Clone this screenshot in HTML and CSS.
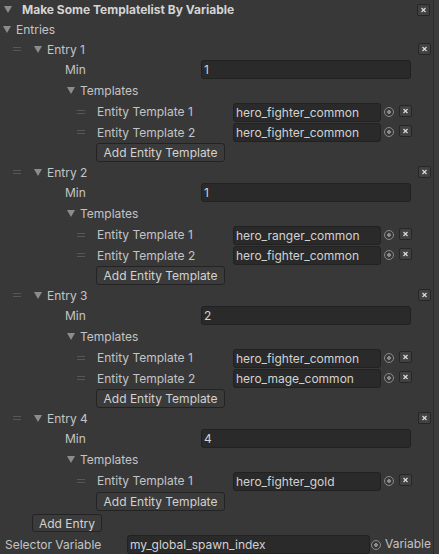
FILE: index.html
```html
<!DOCTYPE html>
<html>
<head>
<meta charset="utf-8">
<link rel="stylesheet" href="styles.css">
</head>
<body>
<div class="wrap">
<div class="panel">
  <div class="row header"><span class="tri"></span><span class="title">Make Some Templatelist By Variable</span><span class="rm"></span></div>
  <div class="row entries"><span class="tri"></span><span>Entries</span></div>

  <div class="entry">
    <div class="row erow"><span class="handle"></span><span class="tri"></span><span>Entry 1</span><span class="rm"></span></div>
    <div class="row minrow"><span class="lbl">Min</span><span class="field num">1</span></div>
    <div class="row trow"><span class="tri"></span><span>Templates</span></div>
    <div class="row etrow t1"><span class="handle"></span><span class="lbl">Entity Template 1</span><span class="field obj">hero_fighter_common</span><span class="pick"></span><span class="rm"></span></div>
    <div class="row etrow"><span class="handle"></span><span class="lbl">Entity Template 2</span><span class="field obj">hero_fighter_common</span><span class="pick"></span><span class="rm"></span></div>
    <div class="row addrow"><span class="btn addet">Add Entity Template</span></div>
  </div>

  <div class="entry">
    <div class="row erow"><span class="handle"></span><span class="tri"></span><span>Entry 2</span><span class="rm"></span></div>
    <div class="row minrow"><span class="lbl">Min</span><span class="field num">1</span></div>
    <div class="row trow"><span class="tri"></span><span>Templates</span></div>
    <div class="row etrow t1"><span class="handle"></span><span class="lbl">Entity Template 1</span><span class="field obj">hero_ranger_common</span><span class="pick"></span><span class="rm"></span></div>
    <div class="row etrow"><span class="handle"></span><span class="lbl">Entity Template 2</span><span class="field obj">hero_fighter_common</span><span class="pick"></span><span class="rm"></span></div>
    <div class="row addrow"><span class="btn addet">Add Entity Template</span></div>
  </div>

  <div class="entry">
    <div class="row erow"><span class="handle"></span><span class="tri"></span><span>Entry 3</span><span class="rm"></span></div>
    <div class="row minrow"><span class="lbl">Min</span><span class="field num">2</span></div>
    <div class="row trow"><span class="tri"></span><span>Templates</span></div>
    <div class="row etrow t1"><span class="handle"></span><span class="lbl">Entity Template 1</span><span class="field obj">hero_fighter_common</span><span class="pick"></span><span class="rm"></span></div>
    <div class="row etrow"><span class="handle"></span><span class="lbl">Entity Template 2</span><span class="field obj">hero_mage_common</span><span class="pick"></span><span class="rm"></span></div>
    <div class="row addrow"><span class="btn addet">Add Entity Template</span></div>
  </div>

  <div class="entry">
    <div class="row erow"><span class="handle"></span><span class="tri"></span><span>Entry 4</span><span class="rm"></span></div>
    <div class="row minrow"><span class="lbl">Min</span><span class="field num">4</span></div>
    <div class="row trow"><span class="tri"></span><span>Templates</span></div>
    <div class="row etrow t1"><span class="handle"></span><span class="lbl">Entity Template 1</span><span class="field obj">hero_fighter_gold</span><span class="pick"></span><span class="rm"></span></div>
    <div class="row addrow"><span class="btn addet">Add Entity Template</span></div>
  </div>

  <div class="row addentry"><span class="btn">Add Entry</span></div>
  <div class="row selrow"><span class="lbl">Selector Variable</span><span class="field sel">my_global_spawn_index</span><span class="pick"></span><span class="var">Variable</span></div>
</div>
<div class="strip"></div>
</div>
</body>
</html>
```
FILE: styles.css
```css
html, body {
  margin: 0;
  padding: 0;
  background: #383838;
}
body {
  font-family: Inter, "Noto Sans", sans-serif;
  font-size: 12px;
  color: #c4c4c4;
  width: 439px;
  height: 554px;
  overflow: hidden;
}
.wrap {
  display: flex;
  height: 554px;
}
.panel {
  width: 433px;
  display: flex;
  flex-direction: column;
}
.strip {
  width: 5px;
  border-left: 1px solid #2c2c2c;
  background: #3b3b3b;
}
.row {
  display: flex;
  align-items: center;
  white-space: nowrap;
}
.tri {
  width: 0;
  height: 0;
  border-left: 4.5px solid transparent;
  border-right: 4.5px solid transparent;
  border-top: 7px solid #8c8c8c;
  flex: none;
}
.rm {
  flex: none;
  width: 11px;
  height: 10px;
  border: 1px solid #262626;
  border-radius: 2px;
  background: #414141 url("data:image/svg+xml;utf8,<svg xmlns='http://www.w3.org/2000/svg' width='11' height='10'><path d='M3.5 3 L7.5 7 M7.5 3 L3.5 7' stroke='%23d8d8d8' stroke-width='1.3'/></svg>") no-repeat center;
}
.handle {
  flex: none;
  width: 8px;
  height: 4px;
  border-top: 1px solid #575757;
  border-bottom: 1px solid #575757;
  box-sizing: border-box;
}
.field {
  flex: none;
  box-sizing: border-box;
  height: 19px;
  background: #2a2a2a;
  border: 1px solid #212121;
  border-radius: 3px;
  color: #d2d2d2;
  padding-left: 2px;
  display: flex;
  align-items: center;
}
.pick {
  flex: none;
  width: 10px;
  height: 10px;
  box-sizing: border-box;
  border: 1px solid #8a8a8a;
  border-radius: 50%;
  background: radial-gradient(circle, #8a8a8a 0 1.6px, transparent 2px);
}
.btn {
  display: inline-flex;
  align-items: center;
  justify-content: center;
  box-sizing: border-box;
  background: #3b3b3b;
  border: 1px solid #232323;
  border-radius: 3px;
  color: #d2d2d2;
}

/* header */
.header {
  height: 19px;
  padding-left: 4px;
}
.header .title {
  font-weight: bold;
  color: #d4d4d4;
  margin-left: 10px;
}
.header .rm {
  margin-left: auto;
  margin-right: 3px;
}
.entries {
  height: 20px;
  padding-left: 3px;
}
.entries .tri { margin-right: 5px; }

/* entry */
.erow {
  height: 20px;
  padding-left: 13px;
}
.erow .handle { margin-right: 13px; }
.erow .tri { margin-right: 5px; }
.erow .rm {
  margin-left: auto;
  margin-right: 2px;
}
.minrow {
  height: 21px;
  padding-left: 65px;
}
.minrow .lbl { width: 136px; }
.minrow .field { width: 210px; }
.trow {
  height: 21px;
  padding-left: 67px;
}
.trow .tri { margin-right: 5px; }
.etrow {
  height: 20px;
  padding-left: 77px;
}
.etrow.t1 { height: 21px; }
.etrow .handle { margin-right: 12px; }
.etrow .lbl { width: 136px; }
.etrow .field { width: 148px; margin-top: 1px; }
.etrow .pick { margin-left: 3px; }
.etrow .rm { margin-left: 5px; margin-top: -2px; }
.addrow {
  height: 20px;
  padding-left: 96px;
}
.addet {
  width: 129px;
  height: 19px;
}
.addentry {
  height: 21px;
  padding-left: 32px;
  align-items: flex-end;
}
.addentry .btn {
  width: 70px;
  height: 18px;
}
.selrow {
  height: 22px;
  padding-left: 5px;
  align-items: flex-end;
}
.selrow .lbl {
  width: 122px;
  height: 19px;
  line-height: 19px;
}
.selrow .field { width: 243px; }
.selrow .pick { margin-left: 1px; margin-bottom: 4px; }
.var {
  margin-left: 4px;
  height: 19px;
  line-height: 17px;
}
```
